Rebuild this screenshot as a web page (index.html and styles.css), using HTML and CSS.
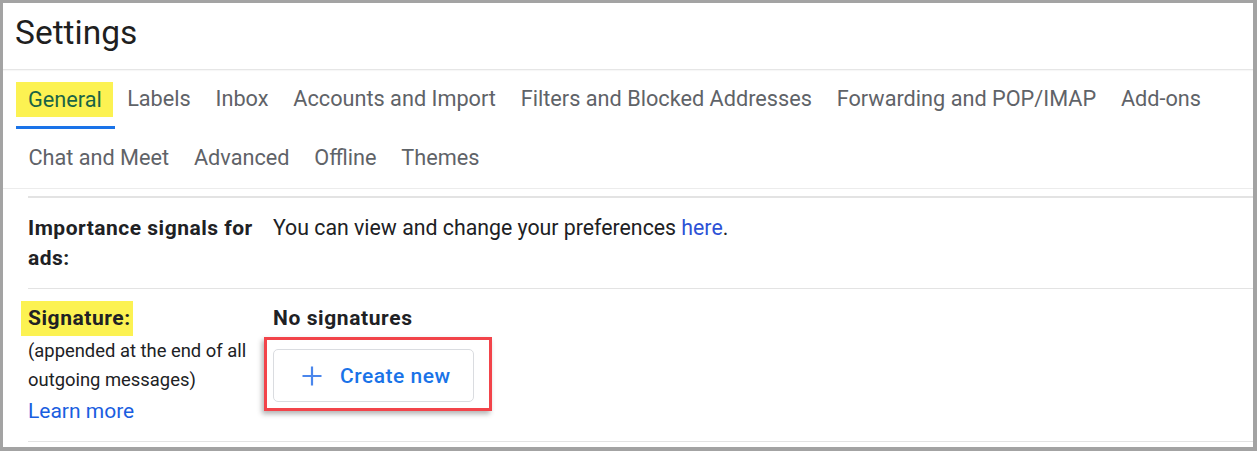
FILE: index.html
```html
<!DOCTYPE html>
<html lang="en">
<head>
<meta charset="utf-8">
<title>Settings</title>
<link rel="stylesheet" href="styles.css">
</head>
<body>
<div class="frame">
  <header class="header">
    <h1 class="title">Settings</h1>
  </header>
  <nav class="tabs">
    <div class="tab-row">
      <div class="tab tab-active"><span class="hl-tab">General</span></div>
      <div class="tab">Labels</div>
      <div class="tab">Inbox</div>
      <div class="tab">Accounts and Import</div>
      <div class="tab">Filters and Blocked Addresses</div>
      <div class="tab">Forwarding and POP/IMAP</div>
      <div class="tab">Add-ons</div>
    </div>
    <div class="tab-row">
      <div class="tab">Chat and Meet</div>
      <div class="tab">Advanced</div>
      <div class="tab">Offline</div>
      <div class="tab">Themes</div>
    </div>
  </nav>
  <main class="content">
    <section class="row row-first">
      <div class="label"><span class="label-main">Importance signals for ads:</span></div>
      <div class="value">You can view and change your preferences <a class="link-here" href="#">here</a>.</div>
    </section>
    <section class="row row-sig">
      <div class="label">
        <div class="label-line"><span class="hl-label">Signature:</span></div>
        <div class="label-note">(appended at the end of all outgoing messages)</div>
        <a class="learn" href="#">Learn more</a>
      </div>
      <div class="value">
        <div class="value-title">No signatures</div>
        <div class="btn-wrap">
          <button class="btn-create" type="button">
            <svg class="plus" viewBox="0 0 20 20" width="20" height="20" aria-hidden="true"><path d="M10 0.5V19.5M0.5 10H19.5" stroke="#4a86ec" stroke-width="2.2" fill="none"/></svg>
            <span>Create new</span>
          </button>
          <div class="annot"></div>
        </div>
      </div>
    </section>
  </main>
</div>
</body>
</html>
```

FILE: styles.css
```css
* { box-sizing: border-box; }
html, body { margin: 0; padding: 0; background: #ffffff; }
body { font-family: Roboto, "Liberation Sans", Arial, sans-serif; color: #202124; }

.frame {
  width: 1257px;
  height: 451px;
  border-style: solid;
  border-color: #a3a3a3;
  border-width: 3px 4px 4px 3px;
  background: #ffffff;
  overflow: hidden;
}

.header {
  height: 67px;
  border-bottom: 1px solid #e6e6e6;
  box-shadow: 0 1px 1px rgba(0,0,0,0.03);
  padding: 10px 0 0 12px;
}
.title {
  margin: 0;
  font-size: 33.5px;
  font-weight: 400;
  line-height: 40px;
  color: #1f1f1f;
}

.tabs {
  padding-left: 13px;
  border-bottom: 1px solid #ececec;
}
.tab-row {
  display: flex;
  height: 59px;
  padding-top: 1px;
}
.tab {
  display: flex;
  align-items: center;
  padding: 0 12.4px;
  font-size: 21.7px;
  color: #5f6368;
  border-bottom: 3px solid transparent;
  white-space: nowrap;
}
.tab-active {
  padding: 0 2px 0 0;
  border-bottom-color: #1a73e8;
  color: #1a6446;
}
.hl-tab {
  display: inline-block;
  background: #fcf252;
  line-height: 35px;
  padding: 0 11px 0 12px;
  margin-top: 2px;
}

.content {
  margin-top: 7px;
  padding-left: 25px;
}
.row {
  display: flex;
  border-top: 1px solid #e3e3e3;
}
.row-first {
  border-top-width: 2px;
  padding: 15px 0 15px 0;
  font-size: 21px;
  line-height: 30px;
}
.label {
  width: 245px;
  flex: none;
  padding-right: 10px;
}
.label-main {
  font-weight: 700;
  letter-spacing: 0.5px;
  color: #202124;
}
.value {
  flex: 1;
  color: #202124;
  font-size: 21.3px;
}
.link-here {
  color: #2e52d6;
  text-decoration: none;
}

.row-sig {
  padding: 12px 0 13px 0;
  border-bottom: 1px solid #e3e3e3;
}
.label-line {
  font-size: 21px;
  line-height: 35px;
  font-weight: 700;
  letter-spacing: 0.55px;
}
.hl-label {
  display: inline-block;
  background: #fcf252;
  margin-left: -7px;
  padding: 0 2px 0 7px;
}
.label-note {
  font-size: 18.4px;
  line-height: 29px;
  color: #202124;
}
.learn {
  display: block;
  font-size: 21px;
  line-height: 34px;
  color: #1a5ee0;
  text-decoration: none;
}
.value-title {
  font-size: 21px;
  line-height: 35px;
  font-weight: 700;
  letter-spacing: 0.6px;
}
.btn-wrap {
  position: relative;
  display: inline-block;
  margin-top: 13px;
}
.btn-create {
  display: flex;
  align-items: center;
  gap: 18px;
  width: 201px;
  height: 53px;
  padding: 0 0 0 28px;
  background: #ffffff;
  border: 1px solid #dadce0;
  border-radius: 5px;
  font-family: Roboto, "Liberation Sans", Arial, sans-serif;
  font-size: 21px;
  font-weight: 500;
  letter-spacing: 0.5px;
  color: #1a73e8;
}
.plus { flex: none; display: block; }
.annot {
  position: absolute;
  left: -9px;
  top: -12px;
  width: 228px;
  height: 74px;
  border: 3px solid #f2444a;
  box-shadow: -2px 3px 5px rgba(0,0,0,0.3);
  pointer-events: none;
}
```
